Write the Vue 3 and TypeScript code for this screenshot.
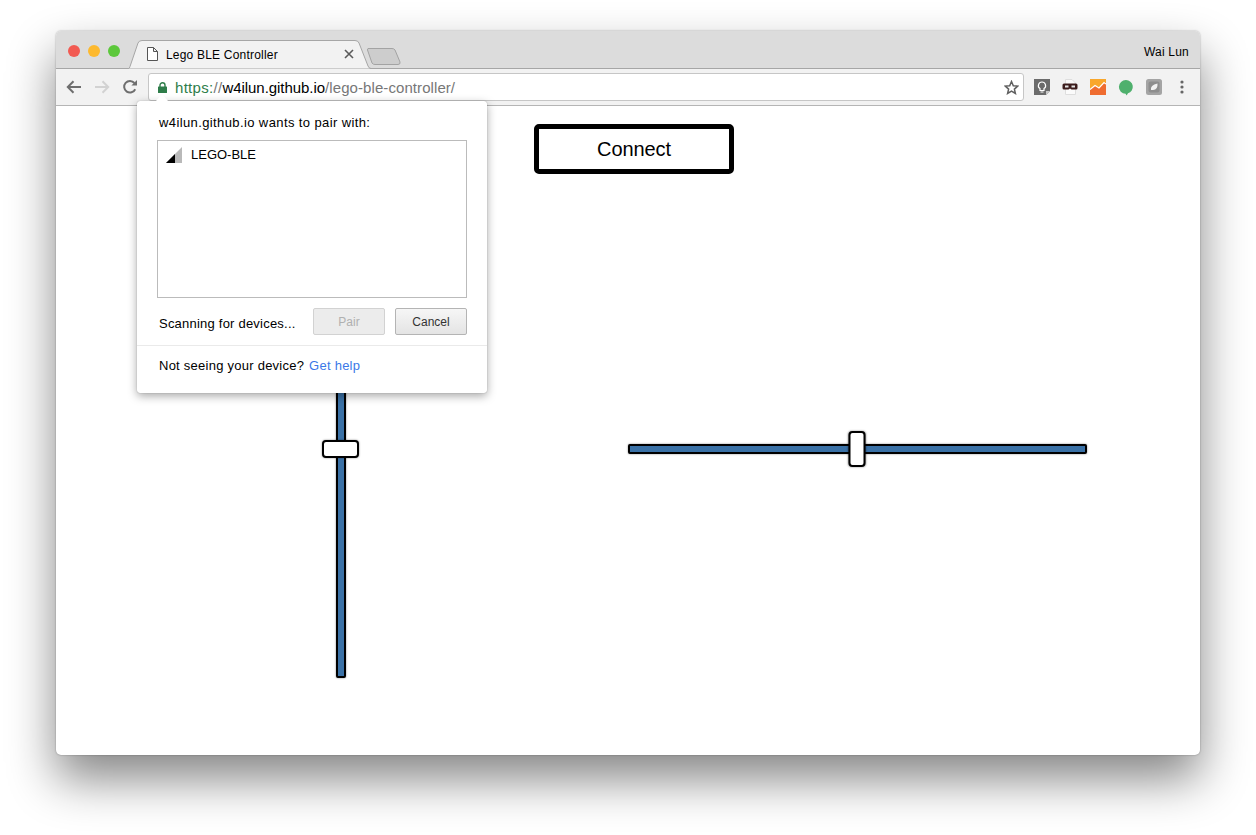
<script setup lang="ts">
import { ref } from "vue";

const lights = ["#f25a52", "#fdb92e", "#5cc83b"];
const steer = ref(50);
const speed = ref(50);
</script>

<template>
  <div class="desktop">
    <div class="window">
      <header class="titlebar">
        <div class="lights">
          <span v-for="c in lights" :key="c" class="light" :style="{ background: c }"></span>
        </div>
        <div class="tab">
          <svg class="tab-bg" width="244" height="29" viewBox="0 0 244 29">
            <path d="M0 28.5 H0.5 Q1.5 28.5 2 26.5 L10 3 Q11 0.5 14 0.5 H227 Q230 0.5 231 3 L240 26 Q241 28.5 243 28.5" fill="#f2f2f2" stroke="#a6a6a6" />
          </svg>
          <svg class="tab-doc" width="11" height="14" viewBox="0 0 11 14">
            <path d="M0.5 0.5 H6.5 L10.5 4.5 V13.5 H0.5 Z M6.5 0.5 V4.5 H10.5" fill="#fff" stroke="#555" />
          </svg>
          <span class="tab-title">Lego BLE Controller</span>
          <svg class="tab-close" width="10" height="10" viewBox="0 0 10 10">
            <path d="M1 1 L9 9 M9 1 L1 9" stroke="#5a5a5a" stroke-width="1.6" />
          </svg>
        </div>
        <svg class="newtab" width="34" height="17" viewBox="0 0 34 17">
          <path d="M1 0.5 H25 Q27 0.5 28 2 L33 14 Q33.5 16.5 31 16.5 H8 Q6 16.5 5 15 L0.5 2 Q0.5 0.5 1 0.5 Z" fill="#cdcdcd" stroke="#a3a3a3" />
        </svg>
        <span class="user">Wai Lun</span>
      </header>

      <nav class="toolbar">
        <svg class="nav" width="16" height="14" viewBox="0 0 16 14">
          <path d="M15 7 H2 M7.5 1.2 L1.8 7 L7.5 12.8" fill="none" stroke="#6e6e6e" stroke-width="2" />
        </svg>
        <svg class="nav" width="16" height="14" viewBox="0 0 16 14">
          <path d="M1 7 H14 M8.5 1.2 L14.2 7 L8.5 12.8" fill="none" stroke="#d2d2d2" stroke-width="2" />
        </svg>
        <svg class="nav" width="16" height="16" viewBox="0 0 16 16">
          <path d="M13.2 10.2 A5.8 5.8 0 1 1 12.4 4" fill="none" stroke="#6e6e6e" stroke-width="2" />
          <path d="M9.4 6.6 H15 V1 Z" fill="#6e6e6e" />
        </svg>
        <div class="omnibox">
          <svg class="lock" width="9" height="11" viewBox="0 0 9 11">
            <path d="M2 5 V3.2 A2.5 2.5 0 0 1 7 3.2 V5" fill="none" stroke="#2e7d4a" stroke-width="1.4" />
            <rect x="0" y="4.5" width="9" height="6.5" rx="0.6" fill="#2e7d4a" />
          </svg>
          <span class="url"><span class="scheme">https:</span><span class="path slashes">//</span><span class="host">w4ilun.github.io</span><span class="path">/lego-ble-controller/</span></span>
          <svg class="star" width="15" height="15" viewBox="0 0 15 15">
            <path d="M7.5 1.5 L9.3 5.7 L13.8 6.1 L10.4 9.1 L11.4 13.5 L7.5 11.2 L3.6 13.5 L4.6 9.1 L1.2 6.1 L5.7 5.7 Z" fill="none" stroke="#5f5f5f" stroke-width="1.5" />
          </svg>
        </div>
        <div class="extensions">
          <svg width="16" height="16" viewBox="0 0 16 16">
            <path d="M0 0 H16 V12 L12 16 H0 Z" fill="#6b6b6b" />
            <path d="M12 16 V12 H16 Z" fill="#c8c8c8" />
            <path d="M8 3 A3.6 3.6 0 0 0 6 9.6 V11.5 H10 V9.6 A3.6 3.6 0 0 0 8 3 Z M6.5 13 H9.5" fill="none" stroke="#fff" stroke-width="1.2" />
          </svg>
          <svg width="16" height="16" viewBox="0 0 16 16">
            <path d="M3.5 0.5 H10 L13.5 4 V15.5 H3.5 Z" fill="#fbfbfb" stroke="#dedede" />
            <path d="M0.5 6 Q0.5 4.5 2 4.5 H14 Q15.5 4.5 15.5 6 V9 Q15.5 10.5 14 10.5 H9.5 L8 9.5 L6.5 10.5 H2 Q0.5 10.5 0.5 9 Z" fill="#3c1c1c" />
            <rect x="3" y="6.5" width="3.5" height="2" fill="#e4e4e4" />
            <rect x="9.5" y="6.5" width="3.5" height="2" fill="#e4e4e4" />
          </svg>
          <svg width="16" height="16" viewBox="0 0 16 16">
            <rect width="16" height="16" fill="#f9a72b" />
            <path d="M0 16 V10 L5 6.5 L9 9 L15 3 L16 4 V16 Z" fill="#ef6c30" />
            <path d="M0 10.5 L5 6.5 L9 9 L14 3.5 L16 5" fill="none" stroke="#fff" stroke-width="1.2" />
          </svg>
          <svg width="16" height="17" viewBox="0 0 16 17">
            <path d="M8 1 A6.8 6.8 0 0 1 10 14.3 L8.6 16.5 L7.6 14.8 A6.9 6.9 0 0 1 8 1 Z" fill="#4fb06d" />
          </svg>
          <svg width="16" height="16" viewBox="0 0 16 16">
            <rect width="16" height="16" rx="2.5" fill="#a4a4a4" />
            <rect x="2.5" y="2.5" width="11" height="11" rx="2" fill="#8e8e8e" />
            <path d="M5 11 Q4 6 11.5 4.5 Q12 11 7 11 Z" fill="#f2f2f2" />
          </svg>
          <svg class="menu" width="4" height="14" viewBox="0 0 4 14">
            <circle cx="2" cy="2" r="1.6" fill="#666" />
            <circle cx="2" cy="7" r="1.6" fill="#666" />
            <circle cx="2" cy="12" r="1.6" fill="#666" />
          </svg>
        </div>
      </nav>

      <main class="page">
        <button class="connect">Connect</button>
        <div class="controls">
          <div class="slider vertical">
            <div class="track"></div>
            <div class="thumb" :style="{ top: steer + '%' }"></div>
          </div>
          <div class="slider horizontal">
            <div class="track"></div>
            <div class="thumb" :style="{ left: speed + '%' }"></div>
          </div>
        </div>
      </main>

      <section class="chooser">
        <svg class="arrow" width="24" height="9" viewBox="0 0 24 9">
          <path d="M0 9 L6 8 L12 1 L18 8 L24 9 Z" fill="#fff" />
        </svg>
        <div class="chooser-main">
          <p class="origin">w4ilun.github.io wants to pair with:</p>
          <div class="devices">
            <div class="device">
              <svg width="16" height="16" viewBox="0 0 16 16">
                <path d="M0 16 L16 0 V16 Z" fill="#b9b9b9" />
                <path d="M0 16 L9 7 V16 Z" fill="#000" />
              </svg>
              <span>LEGO-BLE</span>
            </div>
          </div>
          <div class="actions">
            <span class="status">Scanning for devices...</span>
            <button class="btn" disabled>Pair</button>
            <button class="btn">Cancel</button>
          </div>
        </div>
        <div class="chooser-foot">
          Not seeing your device? <a class="help">Get help</a>
        </div>
      </section>
    </div>
  </div>
</template>

<style>
html,
body {
  margin: 0;
  background: #fff;
}
</style>

<style scoped>
.desktop {
  box-sizing: border-box;
  height: 835px;
  padding: 31px 56px 0;
  overflow: hidden;
}

.window {
  position: relative;
  width: 1144px;
  height: 724px;
  border-radius: 5px;
  background: #fff;
  display: flex;
  flex-direction: column;
  font-family: "Liberation Sans", Arial, sans-serif;
  box-shadow: 0 24px 48px rgba(0, 0, 0, 0.48), 0 0 2px rgba(0, 0, 0, 0.35);
}

.titlebar {
  height: 37px;
  flex: none;
  display: flex;
  align-items: flex-start;
  background: #dcdcdc;
  border-bottom: 1px solid #a6a6a6;
  border-radius: 5px 5px 0 0;
}

.lights {
  display: flex;
  gap: 8px;
  padding: 14px 0 0 12px;
}

.light {
  width: 12px;
  height: 12px;
  border-radius: 50%;
}

.tab {
  position: relative;
  width: 244px;
  height: 28px;
  margin: 9px 0 0 8px;
  display: flex;
  align-items: center;
  flex: none;
}

.tab-bg {
  position: absolute;
  left: 0;
  top: 0;
  z-index: 0;
}

.tab-doc {
  position: relative;
  margin: 0 0 0 19px;
}

.tab-title {
  position: relative;
  top: 1px;
  margin-left: 8px;
  font-size: 12px;
  letter-spacing: 0.2px;
  color: #000;
}

.tab-close {
  position: absolute;
  left: 216px;
  top: 9px;
}

.newtab {
  margin: 17px 0 0 -5px;
}

.user {
  margin: 14px 11px 0 auto;
  font-size: 12px;
  letter-spacing: 0.2px;
  color: #000;
}

.toolbar {
  height: 36px;
  flex: none;
  display: flex;
  align-items: center;
  background: #f2f2f2;
  border-bottom: 1px solid #b5b5b5;
  padding-left: 10px;
  gap: 12px;
}

.nav {
  flex: none;
}

.omnibox {
  box-sizing: border-box;
  width: 876px;
  height: 28px;
  margin-left: -2px;
  display: flex;
  align-items: center;
  background: #fff;
  border: 1px solid #c6c6c6;
  border-radius: 3px;
  flex: none;
}

.lock {
  margin-left: 9px;
}

.url {
  margin-left: 8px;
  font-size: 15px;
  line-height: 15px;
  letter-spacing: 0.08px;
}

.scheme {
  color: #2e7d4a;
  letter-spacing: 0.3px;
}

.path {
  color: #777;
}

.slashes {
  letter-spacing: 0.3px;
}

.host {
  color: #000;
  letter-spacing: -0.05px;
}

.star {
  margin: 0 4px 0 auto;
}

.extensions {
  display: flex;
  align-items: center;
  gap: 12px;
  margin-left: -2px;
}

.menu {
  margin-left: 6px;
}

.page {
  flex: 1;
  padding: 18px 0 0 0;
}

.connect {
  display: block;
  width: 200px;
  height: 50px;
  margin-left: 478px;
  background: #fff;
  border: 5px solid #000;
  border-radius: 5px;
  font-family: inherit;
  font-size: 20px;
  letter-spacing: -0.1px;
  color: #000;
}

.controls {
  display: flex;
  align-items: center;
  margin-top: 46px;
  padding-left: 267px;
  gap: 269px;
}

.slider {
  position: relative;
  display: flex;
  justify-content: center;
  align-items: center;
}

.track {
  box-sizing: border-box;
  background: #3a71a6;
  border: 2px solid #000;
  border-radius: 2px;
  box-shadow: 0 0 2px rgba(0, 0, 0, 0.5);
}

.thumb {
  position: absolute;
  box-sizing: border-box;
  background: #fff;
  border: 2px solid #000;
  border-radius: 4px;
  box-shadow: 0 0 2px rgba(0, 0, 0, 0.5);
}

.vertical {
  width: 36px;
  height: 458px;
}

.vertical .track {
  width: 10px;
  height: 100%;
}

.vertical .thumb {
  left: -1px;
  width: 37px;
  height: 18px;
  transform: translateY(-50%);
}

.horizontal {
  width: 459px;
  height: 36px;
}

.horizontal .track {
  width: 100%;
  height: 10px;
}

.horizontal .thumb {
  top: 0;
  width: 17px;
  height: 36px;
  transform: translateX(calc(-50% - 1px));
}

.chooser {
  position: absolute;
  left: 81px;
  top: 70px;
  width: 350px;
  height: 292px;
  display: flex;
  flex-direction: column;
  background: #fff;
  border-radius: 3px;
  box-shadow: 0 3px 10px rgba(0, 0, 0, 0.35), 0 0 1px rgba(0, 0, 0, 0.4);
  font-size: 13px;
  color: #000;
}

.arrow {
  position: absolute;
  left: 13px;
  top: -8px;
}

.chooser-main {
  padding: 14px 20px 0;
}

.origin {
  margin: 0 0 10px 2px;
  line-height: 15px;
  letter-spacing: 0.39px;
}

.devices {
  box-sizing: border-box;
  height: 158px;
  border: 1px solid #bbb;
  padding: 5px 8px;
}

.device {
  display: flex;
  align-items: center;
  gap: 9px;
  height: 17px;
}

.actions {
  display: flex;
  align-items: center;
  height: 27px;
  margin-top: 10px;
  gap: 10px;
}

.status {
  margin: 3px auto 0 2px;
  letter-spacing: 0.22px;
}

.btn {
  width: 72px;
  height: 27px;
  padding: 0;
  background: linear-gradient(#f6f6f6, #e4e4e4);
  border: 1px solid #b4b4b4;
  border-radius: 2px;
  font-family: inherit;
  font-size: 12px;
  color: #333;
}

.btn:disabled {
  background: #ececec;
  border-color: #d2d2d2;
  color: #b0b0b0;
}

.chooser-foot {
  margin-top: 10px;
  padding: 12px 22px 0;
  border-top: 1px solid #eaeaea;
  line-height: 15px;
  letter-spacing: 0.25px;
}

.help {
  margin-left: 1px;
  color: #3b78e7;
}
</style>
